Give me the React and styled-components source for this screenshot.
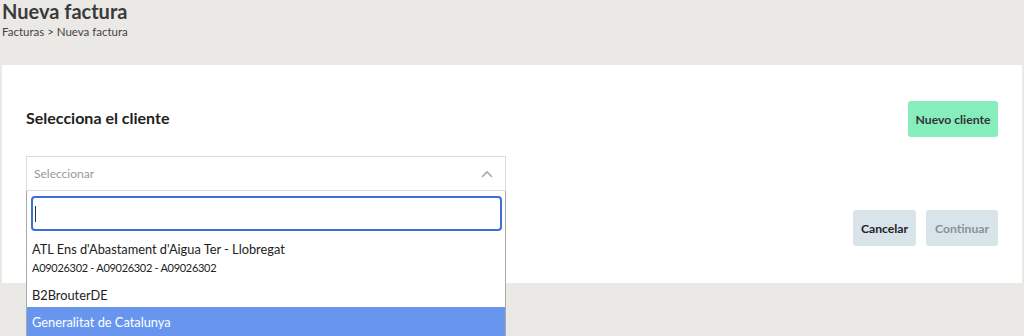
import React from "react";
import styled, { createGlobalStyle } from "styled-components";

const GlobalStyle = createGlobalStyle`
  html, body {
    margin: 0;
    padding: 0;
    background: #ebe9e5;
    font-family: "Lato", "Noto Sans", sans-serif;
    color: #333;
  }
  * { box-sizing: border-box; }
`;

const Page = styled.div`
  padding: 0 2px;
  height: 336px;
  overflow: hidden;
`;

const PageHeader = styled.header`
  height: 65px;
`;

const Title = styled.h1`
  margin: 0;
  font-size: 20px;
  line-height: 23px;
  font-weight: 700;
  color: #3a3a3a;
`;

const Breadcrumb = styled.div`
  margin-top: 2px;
  font-size: 11.5px;
  line-height: 13px;
  color: #444;
`;

const Card = styled.section`
  background: #fff;
  padding: 36px 24px 37px;
  display: flex;
  flex-direction: column;
  gap: 19px;
`;

const HeaderRow = styled.div`
  display: flex;
  align-items: center;
  justify-content: space-between;
  height: 36px;
`;

const SectionTitle = styled.h2`
  margin: 0 0 3px;
  font-size: 16px;
  font-weight: 700;
  color: #222;
`;

const Button = styled.button`
  height: 36px;
  width: ${(p) => p.$w}px;
  border: none;
  border-radius: 3px;
  padding: 0;
  font-family: inherit;
  font-size: 12.2px;
  font-weight: 700;
  background: ${(p) => (p.$variant === "green" ? "#86edbc" : "#d9e4ea")};
  color: ${(p) => (p.$disabled ? "#8a9095" : p.$variant === "green" ? "#333" : "#222")};
  cursor: pointer;
`;

const SelectWrap = styled.div`
  position: relative;
  width: 480px;
`;

const SelectBox = styled.div`
  height: 35px;
  border: 1px solid #dcdcdc;
  display: flex;
  align-items: center;
  justify-content: space-between;
  padding: 0 12px 0 7px;
  font-size: 12px;
  color: #999;
`;

const Dropdown = styled.div`
  position: absolute;
  top: 100%;
  left: 0;
  right: 0;
  background: #fff;
  border: 1px solid #aaa;
  border-top: none;
  z-index: 10;
`;

const SearchWrap = styled.div`
  padding: 5px 3px 0 4px;
`;

const SearchInput = styled.div`
  height: 35px;
  border: 2px solid #3a6fd6;
  border-radius: 4px;
  display: flex;
  align-items: center;
  padding-left: 2px;

  &::before {
    content: "";
    width: 1px;
    height: 16px;
    background: #333;
  }
`;

const Option = styled.div`
  padding: ${(p) => p.$pad};
  font-size: 12.8px;
  line-height: 16px;
  color: ${(p) => (p.$active ? "#fff" : "#222")};
  background: ${(p) => (p.$active ? "#6896ef" : "#fff")};
`;

const Sub = styled.div`
  font-size: 11px;
  letter-spacing: -0.3px;
  margin-top: 3px;
`;

const Actions = styled.div`
  display: flex;
  justify-content: flex-end;
  gap: 10px;
`;

const Chevron = () => (
  <svg width="12" height="8" viewBox="0 0 12 8" fill="none">
    <path d="M1 7 L6 2 L11 7" stroke="#aaa" strokeWidth="1.6" />
  </svg>
);

export default function App() {
  return (
    <Page>
      <GlobalStyle />
      <PageHeader>
        <Title>Nueva factura</Title>
        <Breadcrumb>Facturas &gt; Nueva factura</Breadcrumb>
      </PageHeader>
      <Card>
        <HeaderRow>
          <SectionTitle>Selecciona el cliente</SectionTitle>
          <Button $variant="green" $w={90}>Nuevo cliente</Button>
        </HeaderRow>
        <SelectWrap>
          <SelectBox>
            <span>Seleccionar</span>
            <Chevron />
          </SelectBox>
          <Dropdown>
            <SearchWrap>
              <SearchInput />
            </SearchWrap>
            <Option $pad="10px 5px 5px">
              ATL Ens d'Abastament d'Aigua Ter - Llobregat
              <Sub>A09026302 - A09026302 - A09026302</Sub>
            </Option>
            <Option $pad="6px 5px 4px">B2BrouterDE</Option>
            <Option $pad="7px 5px 6px" $active>Generalitat de Catalunya</Option>
          </Dropdown>
        </SelectWrap>
        <Actions>
          <Button $w={63}>Cancelar</Button>
          <Button $w={72} $disabled>Continuar</Button>
        </Actions>
      </Card>
    </Page>
  );
}
